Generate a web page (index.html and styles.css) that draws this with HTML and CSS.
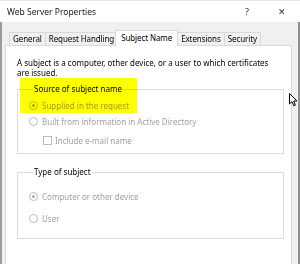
FILE: index.html
```html
<!DOCTYPE html>
<html lang="en">
<head>
    <meta charset="UTF-8">
    <title>Web Server Properties</title>
    <link rel="stylesheet" href="styles.css">
</head>
<body>
    <div class="window">
        <div class="titlebar">
            <span class="title">Web Server Properties</span>
            <span class="tb-btn help">?</span>
            <span class="tb-btn close">&#x2715;</span>
        </div>
        <div class="frame">
            <div class="tabs">
                <span class="tab">General</span>
                <span class="tab">Request Handling</span>
                <span class="tab active">Subject Name</span>
                <span class="tab">Extensions</span>
                <span class="tab">Security</span>
            </div>
            <div class="panel">
                <p class="intro">A subject is a computer, other device, or a user to which certificates are issued.</p>

                <fieldset class="group first">
                    <legend>Source of subject name</legend>
                    <div class="row">
                        <span class="radio checked"></span>
                        <span class="label">Supplied in the request</span>
                    </div>
                    <div class="row">
                        <span class="radio"></span>
                        <span class="label">Built from information in Active Directory</span>
                    </div>
                    <div class="row sub">
                        <span class="check"></span>
                        <span class="label">Include e-mail name</span>
                    </div>
                </fieldset>

                <fieldset class="group second">
                    <legend>Type of subject</legend>
                    <div class="row">
                        <span class="radio checked"></span>
                        <span class="label">Computer or other device</span>
                    </div>
                    <div class="row">
                        <span class="radio"></span>
                        <span class="label">User</span>
                    </div>
                </fieldset>
            </div>
        </div>
        <div class="highlight"></div>
        <svg class="cursor" width="9" height="14" viewBox="0 0 9 14">
            <path d="M0.5 0.5 L0.5 11 L3 8.6 L4.8 12.8 L6.4 12.1 L4.7 8 L8 8 Z" fill="#fff" stroke="#000" stroke-width="1" stroke-linejoin="round"/>
        </svg>
    </div>
</body>
</html>
```

FILE: styles.css
```css
body, html {
    margin: 0;
    padding: 0;
    width: 300px;
    height: 264px;
    overflow: hidden;
    font-family: "Noto Sans", "Open Sans", sans-serif;
    font-size: 8px;
    color: #000;
}
.window {
    position: relative;
    width: 300px;
    height: 264px;
    background: #f0f0f0;
    display: flex;
    flex-direction: column;
}
.titlebar {
    height: 22px;
    flex: none;
    background: #fff;
    display: flex;
    align-items: center;
    padding-left: 7px;
    box-sizing: border-box;
    border-top: 1px solid #e6e6e6;
}
.title {
    font-size: 8.5px;
    color: #1a1a1a;
    flex: 1;
}
.tb-btn {
    font-size: 9px;
    color: #333;
    text-align: center;
}
.help {
    width: 10px;
    margin-right: 25px;
}
.close {
    width: 10px;
    margin-right: 13px;
}
.frame {
    flex: 1;
    border-left: 2px solid #9c9c9c;
    border-right: 2px solid #8f8f8f;
    padding: 0 6px 0 3px;
    display: flex;
    flex-direction: column;
}
.tabs {
    display: flex;
    align-items: flex-end;
    height: 23px;
    padding-left: 4px;
    flex: none;
}
.tab {
    height: 12px;
    line-height: 12px;
    padding: 0 3px;
    margin-right: -1px;
    border: 1px solid #d9d9d9;
    border-bottom: none;
    background: #f0f0f0;
    white-space: nowrap;
    letter-spacing: -0.1px;
}
.tab.active {
    position: relative;
    z-index: 1;
    height: 15px;
    line-height: 13px;
    padding: 0 5px;
    margin: 0 -1px -1px -2px;
    background: #fff;
}
.panel {
    flex: 1;
    background: #fff;
    border: 1px solid #d9d9d9;
    border-bottom: none;
    padding: 12px 7px 0 11px;
}
.intro {
    margin: 0;
    line-height: 10px;
    padding-right: 8px;
}
.group {
    margin: 0;
    border: 1px solid #dcdcdc;
    padding: 0 8px 0 11px;
}
.group legend {
    padding: 0 1px;
    margin-left: 4px;
    line-height: 10px;
}
.group.first {
    margin-top: 6px;
    padding-top: 4px;
    padding-bottom: 6px;
}
.group.second {
    margin-top: 13px;
    padding-top: 12px;
    padding-bottom: 13px;
}
.row {
    display: flex;
    align-items: center;
    height: 14px;
    color: #a0a0a0;
}
.row + .row {
    margin-top: 2px;
}
.row.sub {
    margin-top: 5px;
    padding-left: 14px;
}
.group.second .row + .row {
    margin-top: 8px;
}
.radio {
    width: 7px;
    height: 7px;
    border: 1px solid #bcbcbc;
    border-radius: 50%;
    margin-right: 4px;
    position: relative;
    flex: none;
}
.radio.checked::after {
    content: "";
    position: absolute;
    left: 2px;
    top: 2px;
    width: 3px;
    height: 3px;
    border-radius: 50%;
    background: #a8a8a8;
}
.check {
    width: 9px;
    height: 9px;
    border: 1px solid #bcbcbc;
    box-sizing: border-box;
    margin-right: 3px;
    flex: none;
}
.highlight {
    position: absolute;
    left: 20px;
    top: 78px;
    width: 117px;
    height: 35px;
    background: #ffff00;
    mix-blend-mode: multiply;
}
.cursor {
    position: absolute;
    left: 289px;
    top: 93px;
}
```
